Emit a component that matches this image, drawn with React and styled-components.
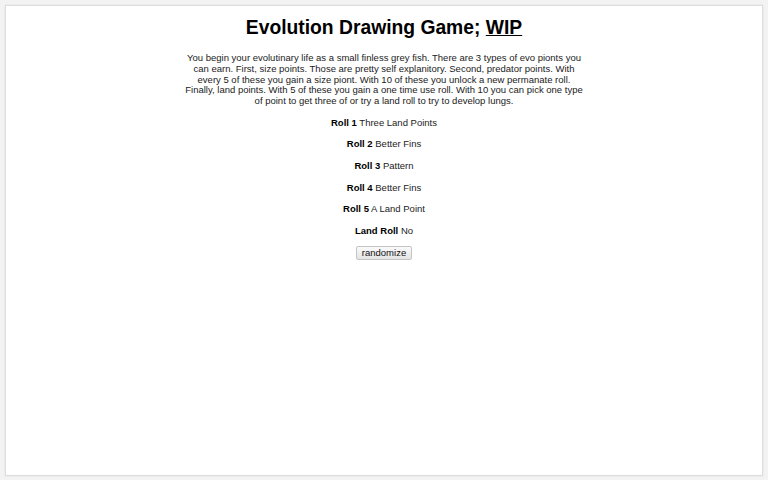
import styled, { createGlobalStyle } from 'styled-components';

const GlobalStyle = createGlobalStyle`
	html, body {
		margin: 0;
		padding: 0;
		background: #f3f3f3;
	}
	body {
		padding: 5px;
		height: 480px;
		box-sizing: border-box;
		font-family: 'Liberation Sans', Arial, sans-serif;
	}
`;

const Panel = styled.div`
	box-sizing: border-box;
	height: 471px;
	width: 758px;
	background: #fff;
	border: 1px solid #dcdcdc;
	box-shadow: 0 0 2px rgba(0, 0, 0, 0.08);
	text-align: center;
	color: #111;
	padding-top: 10px;
`;

const Title = styled.h1`
	margin: 0 0 13px;
	font-size: 19.3px;
	line-height: 24px;
	font-weight: bold;
	color: #000;

	u {
		text-decoration: underline;
	}
`;

const Intro = styled.p`
	width: 402px;
	margin: 0 auto 5px;
	font-size: 9.5px;
	line-height: 10.75px;
	color: #222;
`;

const Roll = styled.p`
	margin: 0;
	font-size: 9.5px;
	line-height: 11.6px;
	padding: 5px 0;
	color: #222;

	strong {
		color: #000;
	}
`;

const Button = styled.button`
	margin-top: 5px;
	font-family: 'Liberation Sans', Arial, sans-serif;
	font-size: 9.5px;
	line-height: 10px;
	padding: 1px 5px;
	color: #111;
	background: linear-gradient(#fafafa, #e4e4e4);
	border: 1px solid #c4c4c4;
	border-radius: 2px;
`;

const rolls = [
	['Roll 1', 'Three Land Points'],
	['Roll 2', 'Better Fins'],
	['Roll 3', 'Pattern'],
	['Roll 4', 'Better Fins'],
	['Roll 5', 'A Land Point'],
	['Land Roll', 'No'],
];

const App = () => {
	return (
		<>
			<GlobalStyle />
			<Panel>
				<Title>
					Evolution Drawing Game; <u>WIP</u>
				</Title>
				<Intro>
					You begin your evolutinary life as a small finless grey fish. There are 3 types of evo pionts you
					can earn. First, size points. Those are pretty self explanitory. Second, predator points. With
					every 5 of these you gain a size piont. With 10 of these you unlock a new permanate roll.
					Finally, land points. With 5 of these you gain a one time use roll. With 10 you can pick one type
					of point to get three of or try a land roll to try to develop lungs.
				</Intro>
				{rolls.map(([label, value]) => (
					<Roll key={label}>
						<strong>{label}</strong> {value}
					</Roll>
				))}
				<Button>randomize</Button>
			</Panel>
		</>
	);
};

export default App;
